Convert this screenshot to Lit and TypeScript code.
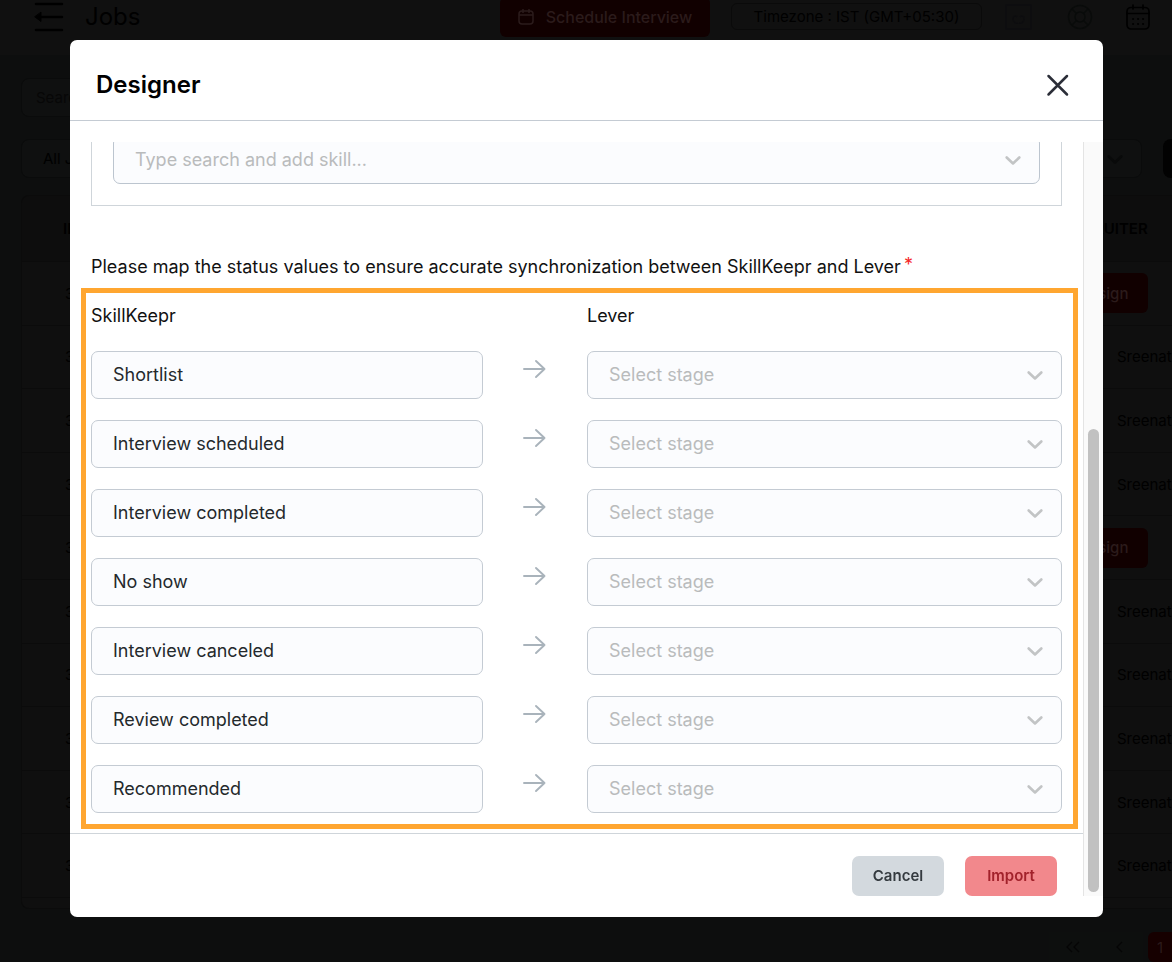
import { LitElement, html, css, svg } from "lit";
import { customElement, property, state } from "lit/decorators.js";

const STATUSES = [
  "Shortlist",
  "Interview scheduled",
  "Interview completed",
  "No show",
  "Interview canceled",
  "Review completed",
  "Recommended",
];

const RECRUITERS = ["", "Sreenath", "Sreenath", "Sreenath", "", "Sreenath", "Sreenath", "Sreenath", "Sreenath", "Sreenath"];

const chevron = svg`<svg class="chevron" width="16" height="12" viewBox="0 0 16 12" fill="none" stroke="currentColor" stroke-width="2.600" stroke-linecap="round" stroke-linejoin="round" aria-hidden="true"><path d="M1.700 3.500 8 9.500l6.300-6"/></svg>`;

@customElement("jobs-page")
class JobsPage extends LitElement {
  static styles = css`
    :host {
      display: flex;
      flex-direction: column;
      height: 100vh;
      overflow: hidden;
      background: #0d0e0e;
      color: #000;
      font: 15px Inter, sans-serif;
    }
    button, input { font: inherit; color: inherit; box-sizing: border-box; }
    .top {
      display: flex;
      align-items: center;
      flex: none;
      height: 55px;
      padding: 0 22px 22px 34px;
      box-sizing: border-box;
      background: #101010;
    }
    .top h1 { margin: 0 auto 0 21px; font-size: 24px; line-height: 32px; font-weight: 400; }
    .schedule {
      display: flex;
      align-items: center;
      justify-content: center;
      gap: 12px;
      width: 210px;
      height: 40px;
      padding: 0;
      border: 0;
      border-radius: 6px;
      background: #110000;
      color: #2b1b1b;
      font-size: 16px;
      font-weight: 500;
      white-space: nowrap;
    }
    .zone {
      width: 251px;
      height: 27px;
      margin: 0 20px 0 21px;
      border: 1px solid #0a0a0a;
      border-radius: 6px;
      background: none;
      padding: 0;
      white-space: nowrap;
    }
    .tools { display: flex; gap: 33px; align-items: center; }
    .main { flex: 1; padding: 23px 0 0 21px; display: flex; flex-direction: column; }
    .box {
      width: 300px;
      height: 39px;
      border: 1px solid #0a0b0b;
      border-radius: 8px;
      background: #0f1010;
      padding: 0 14px;
      flex: none;
    }
    .box::placeholder { color: #070707; opacity: 1; }
    .filters { display: flex; justify-content: space-between; margin-top: 22px; }
    .filters .box { padding: 0 21px; text-align: left; }
    .right { display: flex; gap: 21px; }
    .right .box { display: flex; width: 120px; align-items: center; justify-content: flex-end; padding: 0 18px; color: #090a0a; }
    .more { width: 9px; height: 39px; border: 0; padding: 0; border-radius: 8px 0 0 8px; background: #020202; }
    .card { margin-top: 17px; flex: none; height: 714px; border: 1px solid #0b0b0b; border-right: 0; border-radius: 8px 0 0 8px; box-sizing: border-box; background: #0f0f0f; overflow: hidden; }
    table { width: 100%; height: 702px; table-layout: fixed; border-collapse: collapse; }
    th { height: 65px; text-align: left; font-weight: 600; font-size: 15px; background: #0d0d0d; }
    td { height: 62px; }
    th, td { padding: 0; border-bottom: 1px solid #0b0b0b; white-space: nowrap; }
    th:first-child { padding-left: 41px; }
    td:first-child { padding-left: 43px; }
    th:last-child, td:last-child { width: 108px; }
    .person { padding-left: 53px; }
    .assign { display: block; width: 84px; height: 40px; padding: 0 4px 0 0; border: 0; border-radius: 6px; background: #110000; color: #2b1b1b; font-weight: 500; }
    .pages { display: flex; justify-content: flex-end; margin-top: 23px; height: 30px; }
    .pages button { width: 47px; height: 30px; border: 0; background: #0d0f0e; padding: 0; }
    .pages .current { width: 24px; margin-left: 5px; border-radius: 6px 0 0 6px; background: #160000; color: #2b1b1b; }
  `;

  render() {
    return html`
      <header class="top">
        <svg width="30" height="30" viewBox="0 0 30 30" fill="none" stroke="#000" stroke-width="2.600" stroke-linecap="round" aria-hidden="true">
          <path d="M2 2h26M6 15h22M2 28h26" /><path d="M7 10.500v9L1 15z" fill="#000" stroke-width="1" />
        </svg>
        <h1>Jobs</h1>
        <button class="schedule">
          <svg width="16" height="18" viewBox="0 0 16 18" fill="none" stroke="currentColor" stroke-width="1.500" aria-hidden="true"><rect x="1" y="3" width="14" height="13" rx="3" /><path d="M1 7h14M5 1v4M11 1v4" /></svg>
          Schedule Interview
        </button>
        <button class="zone">Timezone : IST (GMT+05:30)</button>
        <div class="tools">
          <svg width="32" height="30" viewBox="0 0 32 30" fill="none" stroke="#0d0d0f" stroke-width="1.500" aria-hidden="true"><rect x="4" y="3" width="25" height="24" /><path d="M16 21c-2 1-5-1-5-4s3-4 4-2M17 21c2 1 5-1 5-4s-3-4-4-2" /></svg>
          <svg width="26" height="26" viewBox="0 0 26 26" fill="none" stroke="#090b0a" stroke-width="1.500" aria-hidden="true"><circle cx="13" cy="13" r="11.500" /><circle cx="13" cy="13" r="5" /><path d="m5 5 4.500 4.500M21 5l-4.500 4.500M5 21l4.500-4.500M21 21l-4.500-4.500" /></svg>
          <svg width="24" height="26" viewBox="0 0 24 26" fill="none" stroke="#000" stroke-width="1.700" stroke-linecap="round" aria-hidden="true"><rect x="1" y="3.500" width="22" height="21.500" rx="4" /><path d="M1 9.500h22M7 1v4M17 1v4" /><path d="M7 15h.1M12 15h.1M17 15h.1M7 20h.1M12 20h.1M17 20h.1" stroke-width="2" /></svg>
        </div>
      </header>
      <main class="main">
        <input class="box" placeholder="Search" aria-label="Search jobs" />
        <div class="filters">
          <button class="box">All Jobs</button>
          <div class="right">
            <button class="box" aria-label="Filter">${chevron}</button>
            <button class="more" aria-label="More"></button>
          </div>
        </div>
        <div class="card">
          <table>
            <thead><tr><th>ID</th><th></th><th>RECRUITER</th></tr></thead>
            <tbody>
              ${RECRUITERS.map((name) => html`<tr>
                <td>3</td><td></td>
                <td>${name ? html`<div class="person">${name}</div>` : html`<button class="assign">Assign</button>`}</td>
              </tr>`)}
            </tbody>
          </table>
        </div>
        <nav class="pages" aria-label="Pages">
          <button aria-label="First page"><svg width="16" height="12" viewBox="0 0 16 12" fill="none" stroke="#050505" stroke-width="1.300" aria-hidden="true"><path d="M7 1 2 6l5 5M14 1 9 6l5 5" /></svg></button>
          <button aria-label="Previous page"><svg width="8" height="12" viewBox="0 0 8 12" fill="none" stroke="#050505" stroke-width="1.300" aria-hidden="true"><path d="M6 1 1 6l5 5" /></svg></button>
          <button class="current">1</button>
        </nav>
      </main>
    `;
  }
}

@customElement("stage-row")
class StageRow extends LitElement {
  @property() status = "";

  static styles = css`
    :host { display: grid; grid-template-columns: 392fr 104px 475fr; align-items: center; }
    input, select {
      width: 100%;
      height: 48px;
      box-sizing: border-box;
      margin: 0;
      padding: 0 21px;
      border: 1px solid #c4cbd3;
      border-radius: 7px;
      background: #fbfcfe;
      color: #24292c;
      font: inherit;
      appearance: none;
    }
    input { padding-bottom: 2px; }
    select { color: #b9bbbc; }
    .arrow { display: block; margin: 0 auto; padding-bottom: 12px; }
    .field { display: grid; align-items: center; }
    .field > * { grid-area: 1 / 1; }
    .chevron { justify-self: end; margin-right: 19px; color: #c2c4c5; pointer-events: none; }
  `;

  render() {
    return html`
      <input readonly .value=${this.status} aria-label="SkillKeepr status" />
      <svg class="arrow" width="24" height="20" viewBox="0 0 24 20" fill="none" stroke="#a9b3bb" stroke-width="1.900" stroke-linecap="round" stroke-linejoin="round" aria-hidden="true"><path d="M1 10h20.500M13 2l8.500 8-8.500 8" /></svg>
      <div class="field">
        <select aria-label="Lever stage for ${this.status}"><option>Select stage</option></select>
        ${chevron}
      </div>
    `;
  }
}

@customElement("app-root")
class AppRoot extends LitElement {
  @state() private open = true;

  static styles = css`
    :host { display: block; }
    .overlay {
      position: fixed;
      inset: 0;
      display: flex;
      box-sizing: border-box;
      padding: 40px 69px 45px 70px;
    }
    .modal {
      flex: 1;
      min-width: 0;
      display: flex;
      flex-direction: column;
      box-sizing: border-box;
      padding-bottom: 21px;
      border-radius: 7px;
      background: #fff;
      color: #111;
      font: 18px/24px Inter, sans-serif;
    }
    .head {
      display: flex;
      align-items: center;
      justify-content: space-between;
      height: 81px;
      padding: 10px 33px 0 26px;
      box-sizing: border-box;
      flex: none;
      border-bottom: 1px solid #c4cbd3;
      margin-bottom: 21px;
    }
    h2 { margin: 0; font-size: 24px; line-height: 32px; font-weight: 600; color: #000; }
    .close { display: flex; padding: 0; border: 0; background: none; }
    .body { flex: 1; min-height: 0; display: flex; }
    .scroll {
      flex: 1;
      min-width: 0;
      display: flex;
      flex-direction: column;
      justify-content: flex-end;
      overflow: hidden;
    }
    .skills { margin: 0 21px; padding: 21px; border: 1px solid #cfd5da; }
    .skill-field { display: grid; align-items: center; }
    .skill-field > * { grid-area: 1 / 1; }
    .skill-field input {
      width: 100%;
      height: 48px;
      box-sizing: border-box;
      padding: 0 21px 2px;
      border: 1px solid #bcc5cf;
      border-radius: 7px;
      background: #fbfcfe;
      font: inherit;
    }
    .skill-field input::placeholder { color: #b9bbbc; opacity: 1; }
    .chevron { justify-self: end; margin-right: 19px; color: #c2c4c5; }
    .prompt { margin: 49px 0 9px 21px; white-space: nowrap; }
    .required { color: #f52727; vertical-align: 2px; line-height: 1; margin-left: 3px; }
    .mapping {
      margin: 0 5px 4px 11px;
      padding: 11px 11px 11px 5px;
      border: 5px solid #ffa630;
      display: grid;
      gap: 21px;
    }
    .columns { display: grid; grid-template-columns: 392fr 104px 475fr; padding-bottom: 2px; }
    .actions {
      display: flex;
      justify-content: flex-end;
      gap: 21px;
      padding: 22px 26px 0 0;
      border-top: 1px solid #cfd5da;
    }
    .action {
      width: 92px;
      height: 40px;
      padding: 0;
      border: 0;
      border-radius: 7px;
      background: #d3d9de;
      color: #343a3f;
      font: 600 15px/24px Inter, sans-serif;
    }
    .import { background: #f2888c; color: #a2222b; }
    .track {
      width: 20px;
      box-sizing: border-box;
      padding: 4px;
      border-left: 1px solid #e4e4e4;
      background: #fafafa;
      display: flex;
      align-items: flex-end;
    }
    .thumb { width: 11px; height: 62%; border-radius: 6px; background: #c1c1c1; }
  `;

  private close = () => { this.open = false; };

  render() {
    return html`
      <jobs-page></jobs-page>
      ${this.open ? html`
        <div class="overlay">
          <section class="modal" role="dialog" aria-modal="true" aria-labelledby="title">
            <header class="head">
              <h2 id="title">Designer</h2>
              <button class="close" aria-label="Close" @click=${this.close}>
                <svg width="24" height="24" viewBox="0 0 24 24" fill="none" stroke="#2b2e38" stroke-width="2.500" stroke-linecap="round" aria-hidden="true"><path d="m2.500 3 18.500 18.500M21 3 2.500 21.500" /></svg>
              </button>
            </header>
            <div class="body">
              <div class="scroll">
                <div class="skills">
                  <div class="skill-field">
                    <input placeholder="Type search and add skill..." aria-label="Skills" />
                    ${chevron}
                  </div>
                </div>
                <div class="prompt">Please map the status values to ensure accurate synchronization between SkillKeepr and Lever<span class="required">*</span></div>
                <div class="mapping">
                  <div class="columns"><span>SkillKeepr</span><span></span><span>Lever</span></div>
                  ${STATUSES.map((s) => html`<stage-row .status=${s}></stage-row>`)}
                </div>
                <footer class="actions">
                  <button class="action" @click=${this.close}>Cancel</button>
                  <button class="action import">Import</button>
                </footer>
              </div>
              <div class="track"><div class="thumb"></div></div>
            </div>
          </section>
        </div>` : ""}
    `;
  }
}
